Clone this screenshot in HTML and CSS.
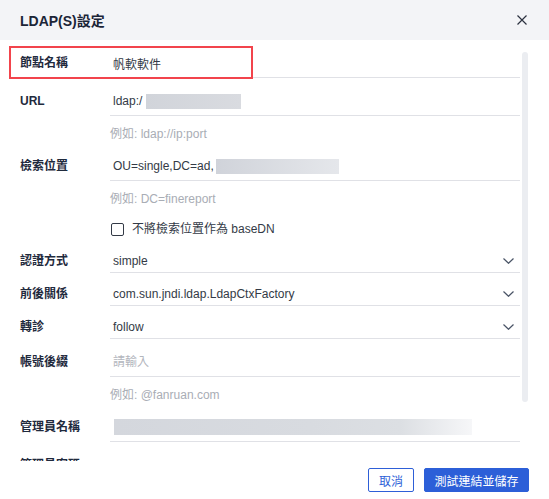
FILE: index.html
```html
<!DOCTYPE html>
<html lang="zh-Hant">
<head>
<meta charset="utf-8">
<title>LDAP(S)設定</title>
<link rel="stylesheet" href="styles.css">
</head>
<body>
<div class="dialog">
  <div class="header">
    <div class="title">LDAP(S)設定</div>
    <svg class="close" width="10" height="10" viewBox="0 0 10 10"><path d="M0.5 0.5 L9.5 9.5 M9.5 0.5 L0.5 9.5" stroke="#2b3240" stroke-width="1.2" fill="none"/></svg>
  </div>
  <div class="body">
    <div class="form">
      <div class="row">
        <div class="label">節點名稱</div>
        <div class="field first">帆軟軟件</div>
      </div>
      <div class="row">
        <div class="label">URL</div>
        <div class="field">ldap:/<span class="redact r1"></span></div>
      </div>
      <div class="hint">例如: ldap://ip:port</div>
      <div class="row">
        <div class="label">檢索位置</div>
        <div class="field">OU=single,DC=ad,<span class="redact r2"></span></div>
      </div>
      <div class="hint">例如: DC=finereport</div>
      <div class="check">
        <span class="box"></span><span>不將檢索位置作為 baseDN</span>
      </div>
      <div class="row sel">
        <div class="label">認證方式</div>
        <div class="field">simple<svg class="chev" width="11" height="6" viewBox="0 0 11 6"><path d="M0.5 0.5 L5.5 5.3 L10.5 0.5" stroke="#4a5466" stroke-width="1.2" fill="none"/></svg></div>
      </div>
      <div class="row sel">
        <div class="label">前後關係</div>
        <div class="field">com.sun.jndi.ldap.LdapCtxFactory<svg class="chev" width="11" height="6" viewBox="0 0 11 6"><path d="M0.5 0.5 L5.5 5.3 L10.5 0.5" stroke="#4a5466" stroke-width="1.2" fill="none"/></svg></div>
      </div>
      <div class="row sel">
        <div class="label">轉診</div>
        <div class="field">follow<svg class="chev" width="11" height="6" viewBox="0 0 11 6"><path d="M0.5 0.5 L5.5 5.3 L10.5 0.5" stroke="#4a5466" stroke-width="1.2" fill="none"/></svg></div>
      </div>
      <div class="row">
        <div class="label">帳號後綴</div>
        <div class="field placeholder">請輸入</div>
      </div>
      <div class="hint">例如: @fanruan.com</div>
      <div class="row">
        <div class="label">管理員名稱</div>
        <div class="field"><span class="redact r3"></span></div>
      </div>
      <div class="row">
        <div class="label">管理員密碼</div>
        <div class="field"></div>
      </div>
    </div>
    <div class="highlight"></div>
    <div class="thumb"></div>
  </div>
  <div class="footer">
    <button class="btn ghost">取消</button>
    <button class="btn primary">測試連結並儲存</button>
  </div>
</div>
</body>
</html>
```
FILE: styles.css
```css
html, body {
  margin: 0;
  padding: 0;
  background: #ffffff;
}
body {
  font-family: "Liberation Sans", "Noto Sans CJK TC", sans-serif;
  font-size: 12px;
  color: #333a46;
}
.dialog {
  width: 549px;
  height: 499px;
  display: flex;
  flex-direction: column;
  overflow: hidden;
}
.header {
  height: 40px;
  flex: none;
  background: #f3f4f7;
  display: flex;
  align-items: center;
  justify-content: space-between;
  padding: 0 22px 0 20px;
}
.title {
  font-size: 14px;
  font-weight: bold;
  color: #1b2537;
}
.close {
  display: block;
}
.body {
  height: 421px;
  flex: none;
  position: relative;
  overflow: hidden;
}
.form {
  padding-left: 20px;
  width: 500px;
}
.row {
  display: flex;
}
.label {
  width: 90px;
  flex: none;
  padding-top: 15px;
  line-height: 16px;
  font-weight: bold;
  color: #1f2a3d;
}
.field {
  width: 407px;
  flex: none;
  padding: 15px 0 6px 3px;
  line-height: 16px;
  height: 16px;
  border-bottom: 1px solid #e0e1e6;
  color: #333a46;
  display: flex;
  align-items: center;
}
.field.first {
  padding-top: 17px;
  padding-bottom: 4px;
}
.sel .label {
  padding-top: 13px;
}
.sel .field {
  padding: 13px 6px 3px 3px;
  width: 401px;
  justify-content: space-between;
}
.chev {
  display: block;
}
.placeholder {
  color: #b3b6bd;
}
.hint {
  margin-left: 90px;
  padding: 10px 0 1px 0;
  line-height: 16px;
  height: 16px;
  color: #a9adb5;
}
.check {
  margin-left: 91px;
  padding: 13px 0 3px 0;
  height: 16px;
  line-height: 16px;
  display: flex;
  align-items: center;
  gap: 8px;
  color: #333a46;
}
.box {
  width: 11px;
  height: 11px;
  border: 1px solid #333a46;
  border-radius: 2px;
  display: block;
}
.redact {
  display: inline-block;
  height: 15px;
}
.r1 {
  width: 95px;
  margin-left: 4px;
  background: linear-gradient(90deg, #d1d4da, #d9dbe0);
}
.r2 {
  width: 123px;
  margin-left: 2px;
  background: linear-gradient(90deg, #d0d3da, #e5e7eb);
}
.r3 {
  width: 358px;
  height: 16px;
  margin-left: 1px;
  background: linear-gradient(90deg, #d4d7dd 0%, #d8dbe0 55%, #dcdfe3 80%, rgba(240,241,244,0.6) 100%);
}
.highlight {
  position: absolute;
  left: 9px;
  top: 6px;
  width: 244px;
  height: 33px;
  box-sizing: border-box;
  border: 2px solid #f2444c;
}
.thumb {
  position: absolute;
  left: 522px;
  top: 12px;
  width: 6px;
  height: 350px;
  border-radius: 3px;
  background: #ebedf1;
}
.footer {
  height: 38px;
  flex: none;
  display: flex;
  justify-content: flex-end;
  align-items: flex-start;
  padding: 7px 20px 0 0;
  box-sizing: border-box;
  gap: 10px;
}
.btn {
  height: 24px;
  font-family: "Liberation Sans", "Noto Sans CJK TC", sans-serif;
  font-size: 12px;
  border-radius: 2px;
  padding: 0;
  margin: 0;
  cursor: pointer;
}
.ghost {
  width: 46px;
  background: #ffffff;
  border: 1px solid #2e5fd7;
  color: #2e5fd7;
}
.primary {
  width: 105px;
  background: #2c5fd8;
  border: 1px solid #2c5fd8;
  color: #ffffff;
}
```
